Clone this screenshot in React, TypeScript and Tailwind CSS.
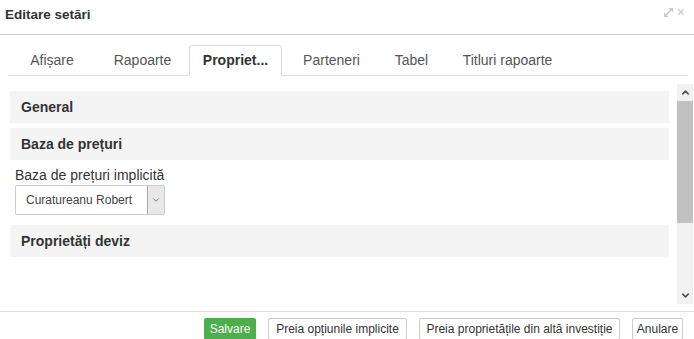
import { ChevronDown, ChevronUp } from "lucide-react";

const TABS = [
	{ label: "Afișare", width: "w-[88px]" },
	{ label: "Rapoarte", width: "w-[93px]" },
	{ label: "Propriet...", width: "w-[93px]", active: true },
	{ label: "Parteneri", width: "w-[99px]" },
	{ label: "Tabel", width: "w-[61px]" },
	{ label: "Titluri rapoarte", width: "w-[131px]" },
];

function SectionBar({ title }: { title: string }) {
	return (
		<div className="flex h-[32px] items-center bg-[#f4f4f4] pl-[11px] text-[14px] font-bold text-[#333]">
			{title}
		</div>
	);
}

function ExpandIcon() {
	return (
		<svg width="11" height="11" viewBox="0 0 11 11" className="text-[#c8c8c8]">
			<line x1="2" y1="9" x2="9" y2="2" stroke="currentColor" strokeWidth="1.3" />
			<polygon points="5.5,1 10,1 10,5.5" fill="currentColor" />
			<polygon points="1,5.5 1,10 5.5,10" fill="currentColor" />
		</svg>
	);
}

function Scrollbar() {
	return (
		<div className="ml-[8px] flex w-[16px] flex-col bg-[#f1f1f1]">
			<div className="flex h-[17px] items-center justify-center">
				<ChevronUp size={11} strokeWidth={3.5} className="text-[#505050]" />
			</div>
			<div className="h-[122px] bg-[#c1c1c1]" />
			<div className="flex-1" />
			<div className="flex h-[17px] items-center justify-center">
				<ChevronDown size={11} strokeWidth={3.5} className="text-[#505050]" />
			</div>
		</div>
	);
}

const BUTTON =
	"flex h-[22px] items-center justify-center rounded-[2px] text-[12px] whitespace-nowrap";

export default function App() {
	return (
		<div className="relative h-[339px] w-[694px] overflow-hidden bg-white font-['Liberation_Sans',Arial,sans-serif] text-[#333]">
			<div className="h-[35px] border-b border-[#cfcfcf] pl-[5px] pt-[7px] text-[13.5px] font-bold leading-[16px]">
				Editare setări
			</div>
			<div className="absolute right-[9px] top-[6px] flex items-center gap-[3px]">
				<ExpandIcon />
				<span className="text-[14px] leading-[12px] text-[#c8c8c8]">×</span>
			</div>

			<div className="ml-[8px] mr-[6px] mt-[10px] flex h-[31px] border-b border-[#ddd]">
				{TABS.map((tab) =>
					tab.active ? (
						<div
							key={tab.label}
							className={`${tab.width} -mb-px flex h-[31px] items-center justify-center rounded-t-[3px] border border-b-white border-[#ddd] bg-white text-[14px] font-bold text-[#333]`}
						>
							{tab.label}
						</div>
					) : (
						<div
							key={tab.label}
							className={`${tab.width} flex h-[30px] items-center justify-center text-[14px] text-[#555]`}
						>
							{tab.label}
						</div>
					),
				)}
			</div>

			<div className="mt-[8px] flex h-[220px]">
				<div className="ml-[10px] w-[659px] pt-[7px]">
					<SectionBar title="General" />
					<div className="mt-[5px]">
						<SectionBar title="Baza de prețuri" />
					</div>
					<div className="ml-[5px] mt-[7px] text-[14px] leading-[16px] text-[#333]">
						Baza de prețuri implicită
					</div>
					<div className="ml-[5px] mt-[2px] flex h-[30px] w-[150px] overflow-hidden rounded-[2px] border border-[#ccc] bg-white">
						<div className="flex flex-1 items-center pl-[10px] text-[12px] text-[#444]">
							Curatureanu Robert
						</div>
						<div className="flex w-[17px] items-center justify-center border-l border-[#a9a9a9] bg-[#e8e8e8]">
							<ChevronDown size={10} strokeWidth={2} className="text-[#666]" />
						</div>
					</div>
					<div className="mt-[10px]">
						<SectionBar title="Proprietăți deviz" />
					</div>
				</div>
				<Scrollbar />
			</div>

			<div className="mt-[7px] flex justify-end gap-[12px] border-t border-[#ddd] pr-[11px] pt-[6px]">
				<button className={`${BUTTON} w-[52px] bg-[#4cae4c] text-white`}>Salvare</button>
				<button className={`${BUTTON} w-[139px] border border-[#ccc] bg-white text-[#333]`}>
					Preia opțiunile implicite
				</button>
				<button className={`${BUTTON} w-[201px] border border-[#ccc] bg-white text-[#333]`}>
					Preia proprietățile din altă investiție
				</button>
				<button className={`${BUTTON} w-[51px] border border-[#ccc] bg-white text-[#333]`}>
					Anulare
				</button>
			</div>
		</div>
	);
}
